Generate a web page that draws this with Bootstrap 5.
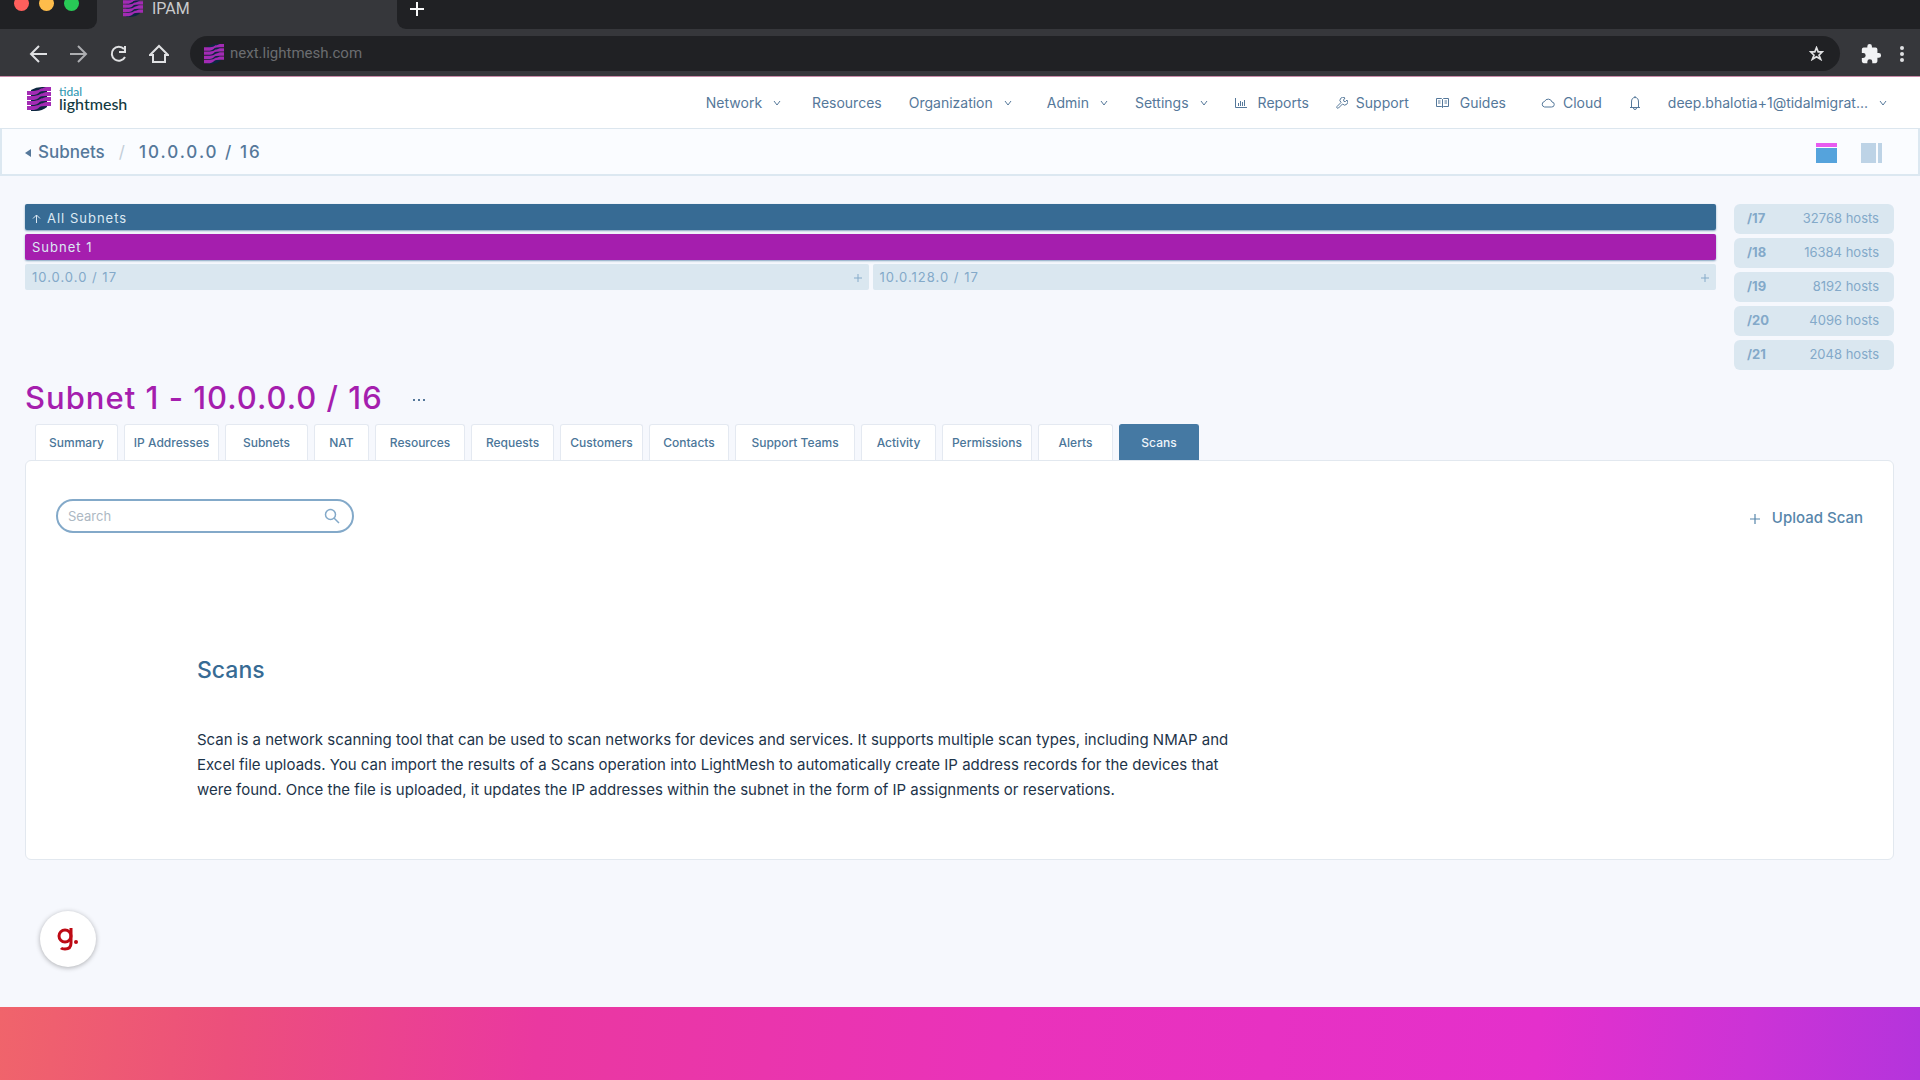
<!DOCTYPE html>
<html lang="en">
<head>
<meta charset="utf-8">
<meta name="viewport" content="width=device-width, initial-scale=1">
<title>IPAM</title>
<link href="https://cdn.jsdelivr.net/npm/bootstrap@5.3.0/dist/css/bootstrap.min.css" rel="stylesheet">
<style>
  :root { --steel: #55789a; --blue: #376b94; --pale: #dae7f0; --soft: #83a9c9; --magenta: #a51eae; }
  body { font-family: Inter, "Liberation Sans", sans-serif; background: #f6f8fd; color: #1d3449; }
  a { color: inherit; text-decoration: none; }
  svg { display: block; flex: none; }

  .chrome { background: #36373b; font-family: Roboto, "Liberation Sans", sans-serif; border-bottom: 1px solid #c98aa8; }
  .tab-strip { height: 29px; }
  .strip-end { background: #202124; }
  .lights { width: 97px; border-bottom-right-radius: 9px; padding-left: 14px; gap: 10px; }
  .light { width: 15px; height: 15px; border-radius: 50%; margin-top: -4px; }
  .light-red { background: #ff5f5c; }
  .light-amber { background: #fdbc4b; }
  .light-green { background: #28ca56; }
  .page-tab { width: 300px; padding-left: 26px; gap: 9px; color: #c9cacc; font-size: 16px; line-height: 18px; }
  .new-tab { border-bottom-left-radius: 9px; padding-left: 12px; }
  .tool-row { height: 47px; padding: 2px 14px 0 29px; color: #e0e1e3; }
  .tool-icons { gap: 20px; }
  .tool-row button, .plain-btn { background: none; border: 0; padding: 0; color: inherit; }
  .address { height: 35px; border-radius: 18px; background: #202124; padding: 0 16px 0 14px; margin-left: 21px; margin-right: 20px; gap: 6px; }
  .address input { background: none; border: 0; outline: 0; color: #6b6d70; font-size: 15px; padding: 0; }

  .site-nav { height: 52px; padding: 0 33px 0 27px; border-bottom: 1px solid #dce6ee; color: var(--steel); font-size: 14px; line-height: 20px; }
  .brand-text { font-family: Lato, "Liberation Sans", sans-serif; font-size: 16px; font-weight: 500; line-height: 14px; color: #12393f; }
  .brand-text span { color: #3299b3; font-size: 12px; line-height: 10px; }
  .menu { gap: 27px; }
  .menu a { gap: 11px; }
  .menu .tight { gap: 8px; }

  .crumbs { height: 47px; padding: 3px 35px 0 23px; background: #fafcff; border: 2px solid #dce8f1; border-top: 0; color: var(--steel); font-size: 17px; }
  .crumb-back { gap: 7px; font-weight: 500; }
  .crumb-slash { padding: 0 14px; color: #c3ced8; }
  .spaced { letter-spacing: 2px; font-weight: 500; }
  .views { gap: 24px; }

  .content-area { padding: 28px 26px 0 25px; }
  .map-row { gap: 18px; }
  .band { height: 26px; padding: 1px 7px 0; font-size: 13px; letter-spacing: 1px; border-radius: 2px; color: #dce9f3; gap: 6px; }
  .band-all { background: var(--blue); box-shadow: 0 1px 2px #376b9499; padding-top: 3px; }
  .band-one { background: var(--magenta); box-shadow: 0 1px 2px #376b9499; }
  .band-free { background: var(--pale); color: var(--soft); }
  .sizes { width: 160px; gap: 4px; }
  .size-pill { height: 30px; border-radius: 6px; background: var(--pale); color: var(--soft); font-size: 13px; padding: 0 15px 0 13px; }
  .size-pill b { font-weight: 700; }
  .page-title { font-size: 31px; line-height: 36px; font-weight: 500; letter-spacing: 1px; color: var(--magenta); }
  .title-row { gap: 30px; padding: 10px 0 8px; }

  .tab-list { gap: 6px; padding-left: 10px; }
  .tab-list button { height: 36px; border: 1px solid #e4e9f1; border-bottom: 0; border-radius: 3px 3px 0 0; background: #fff; color: #4b7699; font-size: 12px; font-weight: 500; padding: 0; white-space: nowrap; }
  .tab-list .w-a { width: 55px; } .tab-list .w-b { width: 75px; } .tab-list .w-s { width: 80px; } .tab-list .w-c { width: 83px; }
  .tab-list .w-d { width: 90px; } .tab-list .w-e { width: 95px; } .tab-list .w-f { width: 120px; }
  .tab-list .active { background: #4579a3; border-color: #4579a3; color: #edf4fa; }
  .panel { background: #fff; border: 1px solid #e2e8ef; border-radius: 6px; padding: 38px 30px 57px; }
  .search { width: 298px; height: 34px; border: 2px solid var(--soft); border-radius: 17px; padding: 0 12px 0 10px; }
  .search input { border: 0; outline: 0; background: none; font-size: 13px; padding: 1px 0 0; color: #55789a; }
  .search input::placeholder { color: #adb8c3; opacity: 1; }
  .upload { color: #5786ab; font-size: 15px; font-weight: 500; gap: 12px; padding-top: 5px !important; }
  .about { margin: 122px 0 0 141px; max-width: 1052px; }
  .about h2 { font-size: 23px; line-height: 30px; font-weight: 500; color: var(--blue); margin-bottom: 42px; }
  .about p { font-size: 15px; line-height: 25px; margin: 0; }
  .helper { width: 56px; height: 56px; border-radius: 50%; background: #fff; box-shadow: 0 1px 5px #0000004d; margin: 51px 0 40px 15px; }
  .footer-band { height: 73px; background: linear-gradient(95deg, #f0646b 0%, #ec4f7c 12%, #ea38a0 28%, #ea32ba 52%, #e430cc 80%, #cc33d6 91%, #b434dc 100%); }
</style>
<script src="https://cdn.jsdelivr.net/npm/bootstrap@5.3.0/dist/js/bootstrap.bundle.min.js"></script>
</head>
<body>
<svg class="d-none">
  <symbol id="mesh" viewBox="0 0 24 24">
    <path d="M4 3Q9 0 15 0H20V20Q15 24 9 24H4Z" fill="#0d2740"/>
    <g fill="#a32bb4">
      <path d="M0 4H7Q11 4 15 1Q13 7 7 8H0Z"/>
      <path d="M0 9H7Q11 9 15 6Q13 12 7 13H0Z"/>
      <path d="M0 14H7Q11 14 15 11Q13 17 7 18H0Z"/>
      <path d="M0 19H7Q11 19 15 16Q13 22 7 23H0Z"/>
      <path d="M24 0H19Q14 1 11 5Q15 4 19 4H24Z"/>
      <path d="M24 5H19Q14 6 11 10Q15 9 19 9H24Z"/>
      <path d="M24 10H19Q14 11 11 15Q15 14 19 14H24Z"/>
      <path d="M24 15H19Q14 16 11 20Q15 19 19 19H24Z"/>
    </g>
  </symbol>
  <symbol id="down" viewBox="0 0 8 6"><path d="M1 1 4 5 7 1" fill="none" stroke="currentColor"/></symbol>
  <symbol id="plus" viewBox="0 0 10 10"><path d="M5 0V10M0 5H10" fill="none" stroke="currentColor" stroke-width="1.200"/></symbol>
</svg>

<header class="chrome">
  <div class="tab-strip d-flex">
    <div class="lights strip-end d-flex align-items-start">
      <span class="light light-red"></span><span class="light light-amber"></span><span class="light light-green"></span>
    </div>
    <div class="page-tab d-flex"><svg width="20" height="18"><use href="#mesh" width="20" height="20" y="-3"/></svg><span>IPAM</span></div>
    <div class="new-tab strip-end flex-grow-1"><button class="plain-btn text-light d-block" aria-label="New tab"><svg width="16" height="18" viewBox="0 0 16 18"><path d="M8 2V16M1 9H15" stroke="currentColor" stroke-width="2"/></svg></button></div>
  </div>
  <div class="tool-row d-flex align-items-center">
    <div class="tool-icons d-flex align-items-center">
      <button aria-label="Back"><svg width="20" height="20" viewBox="0 0 20 20" fill="none" stroke="currentColor" stroke-width="2"><path d="M18 10H2M10 2 2 10l8 8"/></svg></button>
      <button aria-label="Forward"><svg width="20" height="20" viewBox="0 0 20 20" fill="none" stroke="#adaeb1" stroke-width="2"><path d="M1 10H17M9 2l8 8-8 8"/></svg></button>
      <button aria-label="Reload"><svg width="20" height="20" viewBox="0 0 20 20" fill="none" stroke="currentColor" stroke-width="2"><path d="M15 5A7 7 0 1 0 16 13"/><path d="M16 2V8H10"/></svg></button>
      <button aria-label="Home"><svg width="20" height="20" viewBox="0 0 20 20" fill="none" stroke="currentColor" stroke-width="2"><path d="M1 11H4V18H16V11H19L10 2Z"/></svg></button>
    </div>
    <div class="address d-flex align-items-center flex-grow-1">
      <svg width="20" height="20"><use href="#mesh"/></svg>
      <input class="flex-grow-1" type="text" aria-label="Address" value="next.lightmesh.com">
      <button aria-label="Bookmark"><svg width="15" height="15" viewBox="0 0 18 18" fill="none" stroke="currentColor" stroke-width="2"><path d="M9 2l2 5 5 0-4 4 2 5-5-3-5 3 2-5-4-4 5 0Z"/></svg></button>
    </div>
    <button aria-label="Extensions"><svg width="22" height="22" viewBox="0 0 24 24" fill="#f1f2f4"><path d="M20.500 11H19V7a2 2 0 0 0-2-2h-4V3.500a2.500 2.500 0 0 0-5 0V5H4a2 2 0 0 0-2 2v4h1.500a2.700 2.700 0 0 1 0 5.400H2V20a2 2 0 0 0 2 2h4v-1.500a2.700 2.700 0 0 1 5.400 0V22H17a2 2 0 0 0 2-2v-4h1.500a2.500 2.500 0 0 0 0-5z"/></svg></button>
    <button class="ms-3" aria-label="Menu"><svg width="8" height="20" viewBox="0 0 8 20" fill="currentColor"><circle cx="4" cy="4" r="2"/><circle cx="4" cy="10" r="2"/><circle cx="4" cy="16" r="2"/></svg></button>
  </div>
</header>

<nav class="site-nav d-flex align-items-center justify-content-between bg-white">
  <a href="#" class="d-flex align-items-center gap-2 pb-2">
    <svg width="24" height="24"><use href="#mesh"/></svg>
    <div class="brand-text d-flex flex-column"><span>tidal</span>lightmesh</div>
  </a>
  <div class="menu d-flex align-items-center">
    <a href="#" class="d-flex align-items-center me-1">Network <svg width="8" height="6"><use href="#down"/></svg></a>
    <a href="#">Resources</a>
    <a href="#" class="d-flex align-items-center me-2">Organization <svg width="8" height="6"><use href="#down"/></svg></a>
    <a href="#" class="d-flex align-items-center">Admin <svg width="8" height="6"><use href="#down"/></svg></a>
    <a href="#" class="d-flex align-items-center">Settings <svg width="8" height="6"><use href="#down"/></svg></a>
    <a href="#" class="d-flex align-items-center"><svg width="12" height="12" viewBox="0 0 12 12" fill="none" stroke="currentColor"><path d="M.5 1V10.500H12M3.500 9V6M5.500 9V4M7.500 9V5M9.500 9V3"/></svg> Reports</a>
    <a href="#" class="tight d-flex align-items-center"><svg width="12" height="12" viewBox="0 0 12 12" fill="none" stroke="currentColor"><path d="M1 9.500 5 5.500A3 3 0 0 1 9 1L7.500 3l.5 1.500L9.500 4.500 11 3A3 3 0 0 1 6.500 7L2.500 11Q1.500 11.500 1 11T1 9.500Z"/></svg> Support</a>
    <a href="#" class="d-flex align-items-center me-2"><svg width="13" height="12" viewBox="0 0 13 12" fill="none" stroke="currentColor"><path d="M.5 1.500H5.500L6.500 2.500 7.500 1.500H12.500V9.500H7.500L6.500 10.500 5.500 9.500H.5ZM6.500 2.500V10.500M2 4H4.500M2 6H4.500M8.500 4H11M8.500 6H11"/></svg> Guides</a>
    <a href="#" class="tight d-flex align-items-center"><svg width="14" height="11" viewBox="0 0 14 11" fill="none" stroke="currentColor"><path d="M3.500 10H10.500A2.500 2.500 0 0 0 11 5 4 4 0 0 0 3.500 4.500 2.800 2.800 0 0 0 3.500 10Z"/></svg> Cloud</a>
    <a href="#" aria-label="Notifications"><svg width="12" height="14" viewBox="0 0 12 14" fill="none" stroke="currentColor"><path d="M1 11.500H11M2.500 11V6A3.500 4.500 0 0 1 9.500 6V11M6 0V1.500M4.500 12A1.500 1.500 0 0 0 7.500 12"/></svg></a>
    <a href="#" class="d-flex align-items-center">deep.bhalotia+1@tidalmigrat... <svg width="8" height="6"><use href="#down"/></svg></a>
  </div>
</nav>

<div class="crumbs d-flex align-items-center justify-content-between">
  <div class="d-flex align-items-center">
    <a href="#" class="crumb-back d-flex align-items-center"><svg width="6" height="8" viewBox="0 0 6 8"><path d="M6 0V8L0 4Z" fill="currentColor"/></svg>Subnets</a>
    <span class="crumb-slash">/</span>
    <span class="spaced">10.0.0.0 / 16</span>
  </div>
  <div class="views d-flex">
    <button class="plain-btn" aria-label="Stacked view"><svg width="21" height="20"><rect width="21" height="4" fill="#e85bf0"/><rect y="5" width="21" height="15" fill="#55a3dc"/></svg></button>
    <button class="plain-btn" aria-label="Side view"><svg width="22" height="20" fill="#bdd3e6"><rect width="15" height="20"/><rect x="17" width="4" height="20"/></svg></button>
  </div>
</div>

<main class="content-area">
  <div class="map-row d-flex">
    <div class="flex-grow-1 d-flex flex-column">
      <a href="#" class="band band-all d-flex align-items-center mb-1"><svg width="9" height="9" viewBox="0 0 9 9"><path d="M4.500 9V1M1 4.500 4.500 1 8 4.500" fill="none" stroke="currentColor"/></svg> All Subnets</a>
      <a href="#" class="band band-one d-flex align-items-center mb-1">Subnet 1</a>
      <div class="d-flex gap-1">
        <a href="#" class="band band-free d-flex align-items-center justify-content-between flex-fill w-50">10.0.0.0 / 17 <svg width="8" height="8"><use href="#plus"/></svg></a>
        <a href="#" class="band band-free d-flex align-items-center justify-content-between flex-fill w-50">10.0.128.0 / 17 <svg width="8" height="8"><use href="#plus"/></svg></a>
      </div>
    </div>
    <div class="sizes d-flex flex-column flex-shrink-0">
      <div class="size-pill d-flex align-items-center justify-content-between"><b>/17</b><span>32768 hosts</span></div>
      <div class="size-pill d-flex align-items-center justify-content-between"><b>/18</b><span>16384 hosts</span></div>
      <div class="size-pill d-flex align-items-center justify-content-between"><b>/19</b><span>8192 hosts</span></div>
      <div class="size-pill d-flex align-items-center justify-content-between"><b>/20</b><span>4096 hosts</span></div>
      <div class="size-pill d-flex align-items-center justify-content-between"><b>/21</b><span>2048 hosts</span></div>
    </div>
  </div>

  <div class="title-row d-flex align-items-center">
    <h1 class="page-title m-0">Subnet 1 - 10.0.0.0 / 16</h1>
    <button class="plain-btn pt-1" aria-label="More"><svg width="14" height="3" viewBox="0 0 14 3" fill="#55789a"><rect width="2" height="2"/><rect x="5" width="2" height="2"/><rect x="10" width="2" height="2"/></svg></button>
  </div>

  <div class="tab-list d-flex" role="tablist">
    <button role="tab" class="w-c">Summary</button>
    <button role="tab" class="w-e">IP Addresses</button>
    <button role="tab" class="w-c">Subnets</button>
    <button role="tab" class="w-a">NAT</button>
    <button role="tab" class="w-d">Resources</button>
    <button role="tab" class="w-c">Requests</button>
    <button role="tab" class="w-c">Customers</button>
    <button role="tab" class="w-s">Contacts</button>
    <button role="tab" class="w-f">Support Teams</button>
    <button role="tab" class="w-b">Activity</button>
    <button role="tab" class="w-d">Permissions</button>
    <button role="tab" class="w-b">Alerts</button>
    <button role="tab" class="w-s active" aria-selected="true">Scans</button>
  </div>
  <section class="panel">
    <div class="d-flex align-items-center justify-content-between">
      <div class="search d-flex align-items-center">
        <input class="flex-grow-1" type="text" placeholder="Search" aria-label="Search">
        <svg width="16" height="16" viewBox="0 0 16 16" fill="none" stroke="#83a9c9"><circle cx="6.500" cy="6.500" r="5" stroke-width="1.500"/><path d="M10 10 15 15" stroke-width="1.500"/></svg>
      </div>
      <button class="plain-btn upload d-flex align-items-center"><svg width="10" height="10"><use href="#plus"/></svg>Upload Scan</button>
    </div>
    <div class="about">
      <h2>Scans</h2>
      <p>Scan is a network scanning tool that can be used to scan networks for devices and services. It supports multiple scan types, including NMAP and Excel file uploads. You can import the results of a Scans operation into LightMesh to automatically create IP address records for the devices that were found. Once the file is uploaded, it updates the IP addresses within the subnet in the form of IP assignments or reservations.</p>
    </div>
  </section>
  <button class="plain-btn helper d-flex align-items-center justify-content-center" aria-label="Guide"><svg width="22" height="24" viewBox="0 0 22 24" fill="none" stroke="#bd0a14" stroke-width="3"><circle cx="8" cy="9" r="6"/><path d="M14 1V16Q14 22 8 22 5 22 4 21"/><circle cx="19" cy="15" r="2" fill="#bd0a14" stroke="none"/></svg></button>
</main>
<footer class="footer-band"></footer>
</body>
</html>
